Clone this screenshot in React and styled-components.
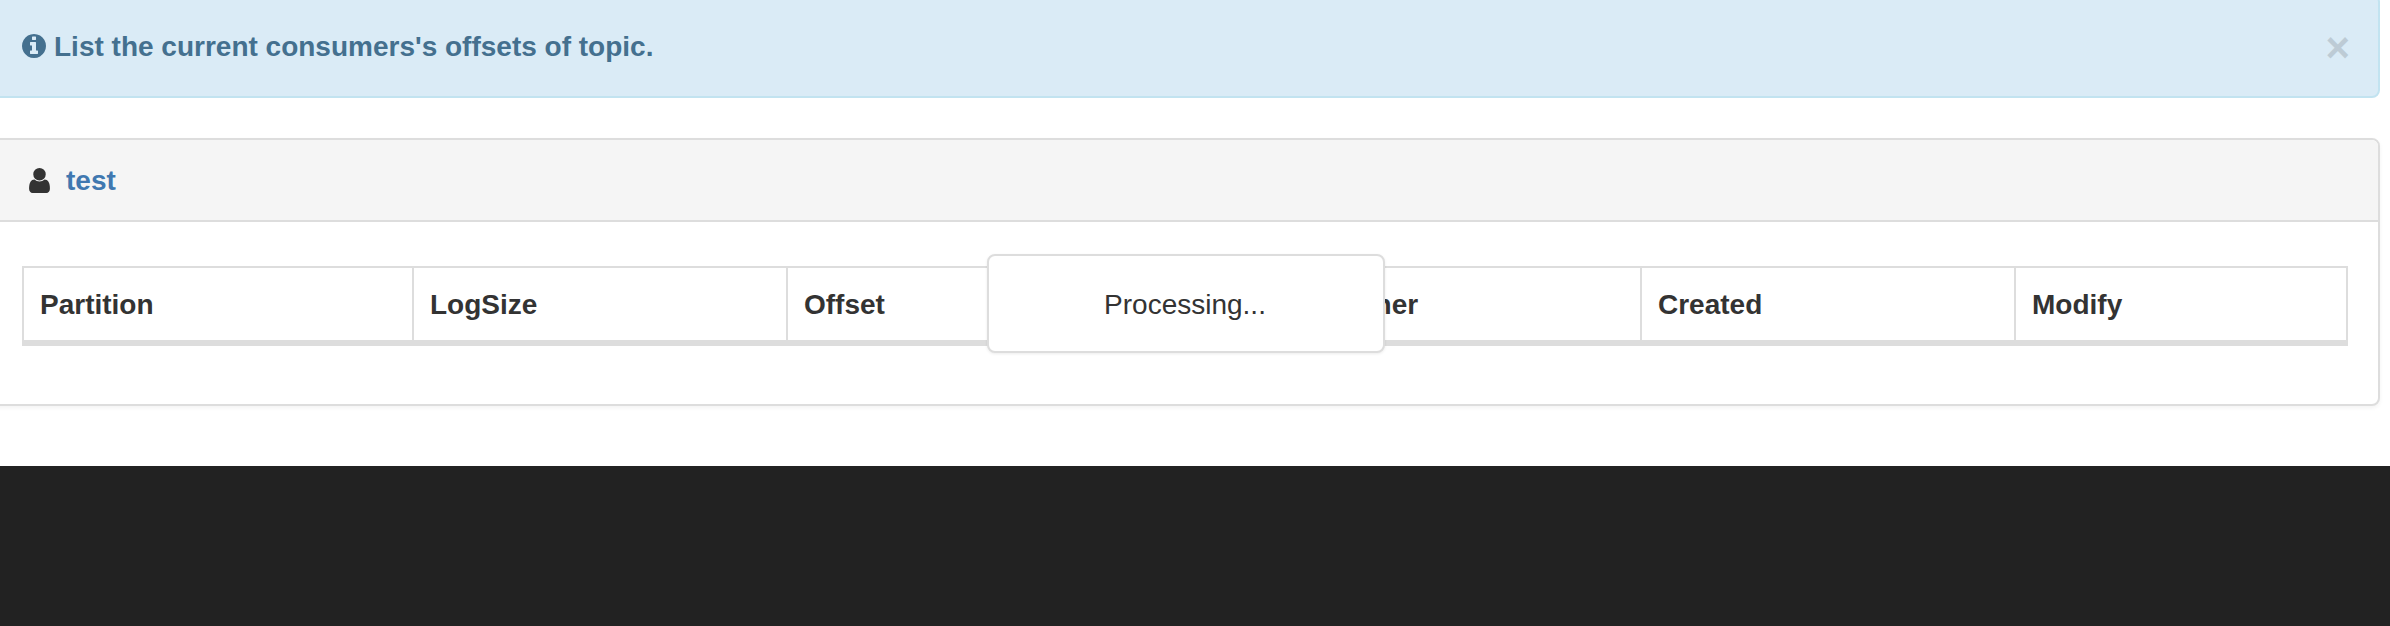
import React from "react";
import styled, { createGlobalStyle } from "styled-components";

const Global = createGlobalStyle`
  html, body { margin: 0; padding: 0; background: #fff; overflow: hidden; }
  body { font-family: "Liberation Sans", Arial, sans-serif; font-size: 28px; color: #333; }
`;

const Page = styled.div`
  display: flex;
  flex-direction: column;
  height: 626px;
  overflow: hidden;
`;

const Content = styled.main`
  display: flex;
  flex-direction: column;
  gap: 40px;
  width: 2390px;
  margin: -6px 0 0 -10px;
  padding-bottom: 60px;
`;

const Alert = styled.div`
  display: flex;
  align-items: center;
  justify-content: space-between;
  padding: 30px;
  border: 2px solid #c2e3f0;
  border-radius: 8px;
  background: #daebf6;
  color: #44708f;
  font-weight: 700;
  line-height: 40px;
`;

const AlertText = styled.div`
  display: flex;
  align-items: center;
  gap: 8px;
`;

const AlertMessage = styled.span`
  padding-top: 1px;
  margin-bottom: -1px;
`;

const Close = styled.span`
  font-size: 42px;
  line-height: 40px;
  color: #000;
  opacity: 0.13;
  margin: 2px -2px -2px 0;
`;

const Panel = styled.section`
  border: 2px solid #ddd;
  border-radius: 8px;
  background: #fff;
  box-shadow: 0 2px 4px rgba(0, 0, 0, 0.05);
`;

const PanelHeader = styled.header`
  display: flex;
  align-items: center;
  gap: 14px;
  height: 80px;
  padding: 0 35px;
  background: #f5f5f5;
  border-bottom: 2px solid #ddd;
  border-radius: 6px 6px 0 0;
`;

const Title = styled.a`
  color: #4078b0;
  font-weight: 700;
  padding-top: 2px;
`;

const PanelBody = styled.div`
  padding: 44px 30px 58px 30px;
`;

const TableWrap = styled.div`
  position: relative;
`;

const Table = styled.table`
  width: 100%;
  table-layout: fixed;
  border-collapse: separate;
  border-spacing: 0;
`;

const Th = styled.th`
  height: 70px;
  padding: 2px 0 0 16px;
  box-sizing: content-box;
  border-top: 2px solid #ddd;
  border-left: 2px solid #ddd;
  border-bottom: 6px solid #ddd;
  text-align: left;
  font-weight: 700;
  color: #333;
  &:last-child { border-right: 2px solid #ddd; }
`;

const Col = styled.col`
  width: ${(p) => p.$w}px;
`;

const Processing = styled.div`
  position: absolute;
  top: -12px;
  left: 965px;
  box-sizing: border-box;
  display: flex;
  align-items: center;
  justify-content: center;
  width: 398px;
  height: 99px;
  padding: 2px 2px 0 0;
  border: 2px solid #ddd;
  border-radius: 8px;
  background: #fff;
  box-shadow: 0 1px 3px rgba(0, 0, 0, 0.08);
  color: #333;
  font-size: 28px;
`;

const Footer = styled.footer`
  flex: 1;
  background: #222;
`;

const Icon = styled.svg`
  display: block;
  flex: none;
  width: ${(p) => p.$size}px;
  height: ${(p) => p.$size}px;
  fill: ${(p) => p.$color};
`;

const InfoIcon = () => (
  <Icon viewBox="128 128 1536 1536" $size={24} $color="#44708f">
    <path d="M1152 1376v-160q0-14-9-23t-23-9h-96v-512q0-14-9-23t-23-9h-320q-14 0-23 9t-9 23v160q0 14 9 23t23 9h96v320h-96q-14 0-23 9t-9 23v160q0 14 9 23t23 9h448q14 0 23-9t9-23zm-128-896v-160q0-14-9-23t-23-9h-192q-14 0-23 9t-9 23v160q0 14 9 23t23 9h192q14 0 23-9t9-23zm640 416q0 209-103 385.5t-279.5 279.5-385.5 103-385.5-103-279.5-279.5-103-385.5 103-385.5 279.5-279.5 385.5-103 385.5 103 279.5 279.5 103 385.5z" />
  </Icon>
);

const UserIcon = () => (
  <Icon viewBox="256 128 1280 1536" $size={25} $color="#333">
    <path d="M1536 1399q0 109-62.5 187t-150.5 78h-854q-88 0-150.5-78t-62.5-187q0-85 8.5-160.5t31.5-151.5 58.5-130 94-88.5 134.5-34.5q131 128 313 128t313-128q76 0 134.5 34.5t94 88.5 58.5 130 31.5 151.5 8.5 160.5zm-256-887q0 159-112.5 271.5t-271.5 112.5-271.5-112.5-112.5-271.5 112.5-271.5 271.5-112.5 271.5 112.5 112.5 271.5z" />
  </Icon>
);

const columns = [
  { name: "Partition", w: 390 },
  { name: "LogSize", w: 374 },
  { name: "Offset", w: 374 },
  { name: "Lag", w: 153 },
  { name: "Owner", w: 327 },
  { name: "Created", w: 374 },
  { name: "Modify", w: 334 },
];

export default function App() {
  return (
    <Page>
      <Global />
      <Content>
        <Alert>
          <AlertText>
            <InfoIcon />
            <AlertMessage>List the current consumers's offsets of topic.</AlertMessage>
          </AlertText>
          <Close>×</Close>
        </Alert>
        <Panel>
          <PanelHeader>
            <UserIcon />
            <Title>test</Title>
          </PanelHeader>
          <PanelBody>
            <TableWrap>
              <Table>
                <colgroup>
                  {columns.map((c) => (
                    <Col key={c.name} $w={c.w} />
                  ))}
                </colgroup>
                <thead>
                  <tr>
                    {columns.map((c) => (
                      <Th key={c.name}>{c.name}</Th>
                    ))}
                  </tr>
                </thead>
              </Table>
              <Processing>Processing...</Processing>
            </TableWrap>
          </PanelBody>
        </Panel>
      </Content>
      <Footer />
    </Page>
  );
}
